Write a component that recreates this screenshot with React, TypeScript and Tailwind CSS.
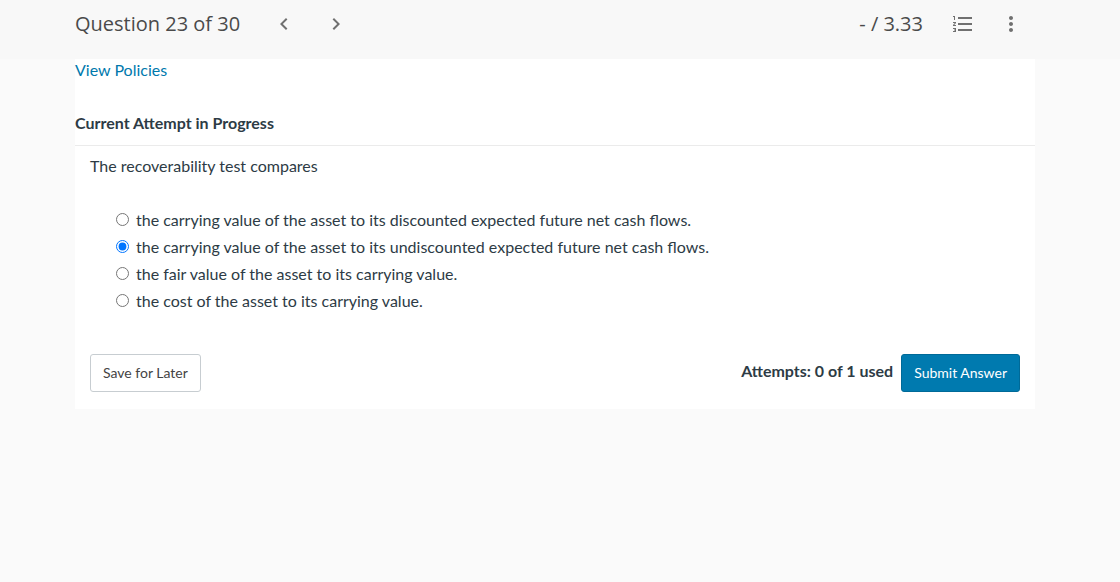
import { useState } from "react";
import { MdChevronLeft, MdChevronRight, MdFormatListNumbered, MdMoreVert } from "react-icons/md";

const TOTAL_QUESTIONS = 30;

const options = [
  "the carrying value of the asset to its discounted expected future net cash flows.",
  "the carrying value of the asset to its undiscounted expected future net cash flows.",
  "the fair value of the asset to its carrying value.",
  "the cost of the asset to its carrying value.",
];

function IconButton({ label, children }: { label: string; children: React.ReactNode }) {
  return (
    <button
      type="button"
      aria-label={label}
      className="flex h-12 w-12 items-center justify-center rounded-full text-[#707070] hover:bg-black/5"
    >
      {children}
    </button>
  );
}

function Header() {
  return (
    <header className="flex items-start justify-between bg-[#f8f8f8] pr-[85px] pb-[11px] pl-[75px] font-['Open_Sans',sans-serif] text-[#4a4a4a]">
      <div className="flex items-center gap-5">
        <h1 className="text-xl">Question 23 of {TOTAL_QUESTIONS}</h1>
        <nav className="flex gap-1">
          <IconButton label="Previous question">
            <MdChevronLeft size={24} />
          </IconButton>
          <IconButton label="Next question">
            <MdChevronRight size={24} />
          </IconButton>
        </nav>
      </div>
      <div className="flex items-center">
        <span className="mr-4 text-xl">- / 3.33</span>
        <IconButton label="Question list">
          <MdFormatListNumbered size={24} />
        </IconButton>
        <IconButton label="More options">
          <MdMoreVert size={24} />
        </IconButton>
      </div>
    </header>
  );
}

export default function App() {
  const [selected, setSelected] = useState(1);

  return (
    <div className="min-h-screen bg-[#fafafa]">
      <Header />
      <main className="mr-[85px] ml-[75px] bg-white font-[Lato,sans-serif] text-base text-[#2d3b45]">
        <a href="#policies" className="block w-fit leading-[22px] text-[#0079ad] hover:underline">
          View Policies
        </a>

        <h2 className="mt-[30px] border-b border-[#ebebeb] pb-2.5 font-bold">Current Attempt in Progress</h2>

        <form className="px-[15px] pb-[17px]" onSubmit={(e) => e.preventDefault()}>
          <fieldset className="pt-2">
            <legend className="float-left w-full">The recoverability test compares</legend>
            <div className="clear-both pt-7 pl-[26px]">
              {options.map((option, index) => (
                <label key={option} className="flex items-start gap-[7px] leading-[27px]">
                  <input
                    type="radio"
                    name="answer"
                    className="mt-[7px] h-[13px] w-[13px] shrink-0"
                    checked={selected === index}
                    onChange={() => setSelected(index)}
                  />
                  {option}
                </label>
              ))}
            </div>
          </fieldset>

          <div className="mt-10 flex items-center justify-between">
            <button
              type="button"
              className="h-[38px] rounded-[3px] border border-[#c7cdd1] px-3 text-sm text-[#444444] hover:bg-gray-50"
            >
              Save for Later
            </button>
            <div className="flex items-center gap-2">
              <span className="pb-1 font-bold">Attempts: 0 of 1 used</span>
              <button
                type="submit"
                className="h-[38px] rounded-[3px] border border-[#006a98] bg-[#007aaf] px-3 text-sm text-white hover:bg-[#006a98]"
              >
                Submit Answer
              </button>
            </div>
          </div>
        </form>
      </main>
    </div>
  );
}
